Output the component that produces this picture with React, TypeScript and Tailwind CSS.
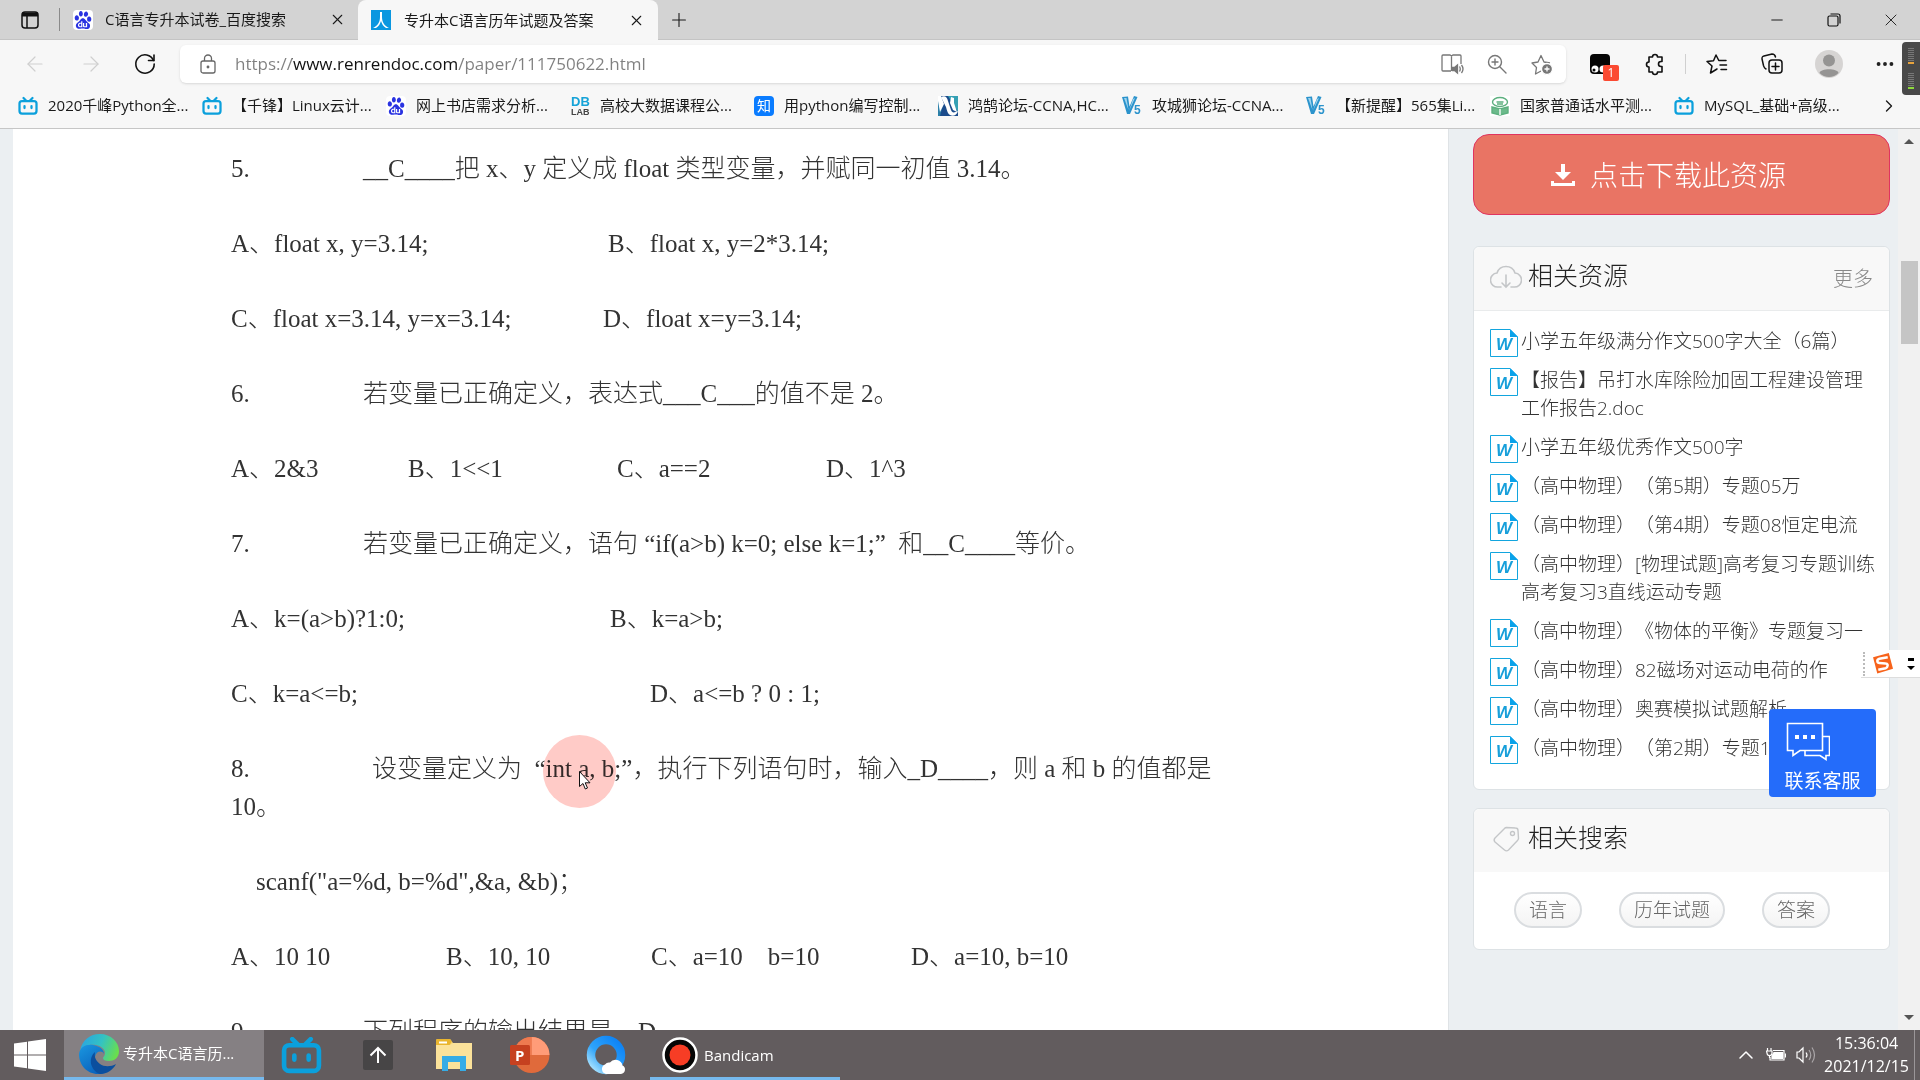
import type { ReactNode } from "react";
import { SiBaidu } from "react-icons/si";
import { ArrowLeft, ArrowRight, ChevronRight, ChevronUp, Minus, MoreHorizontal, Plus, X } from "lucide-react";

interface Bookmark {
  icon: ReactNode;
  label: string;
}

interface DocCell {
  text: string;
  width?: string;
}

const BiliIcon = ({ className }: { className: string }) => (
  <svg viewBox="0 0 40 36" className={className} fill="none" stroke="#0ba0dc" strokeWidth="4.5" strokeLinecap="round">
    <path d="M11 2l5 5M29 2l-5 5" />
    <rect x="3" y="8" width="34" height="25" rx="5" />
    <path d="M13 18v4M27 18v4" />
  </svg>
);

const BaiduIcon = ({ className }: { className: string }) => (
  <span className={`flex items-center justify-center rounded-sm bg-white ${className}`}>
    <SiBaidu className="size-[18px] text-[#2932e1]" />
  </span>
);

const VIcon = () => (
  <svg viewBox="0 0 20 20" className="size-5">
    <path d="M0 1l6-.5 1.500 10L12 0l3.500 1L8 18H5z" fill="#2b93cc" />
    <path d="M2 2l2.500 0 2 12zM11 3l2-1-6 13z" fill="#9fd4ee" />
    <text x="12" y="18" fontSize="12" fontWeight="700" fontFamily="Liberation Sans, sans-serif" fill="#2b93cc">5</text>
  </svg>
);

const bookmarks: Bookmark[] = [
  { icon: <BiliIcon className="size-5" />, label: "2020千峰Python全..." },
  { icon: <BiliIcon className="size-5" />, label: "【千锋】Linux云计..." },
  { icon: <BaiduIcon className="size-5" />, label: "网上书店需求分析..." },
  {
    icon: (
      <svg viewBox="0 0 20 20" className="size-5" fontWeight="700" fontFamily="Liberation Sans, sans-serif">
        <text x="1" y="10" fontSize="13" fill="#16a3d8">DB</text>
        <text x="1" y="19" fontSize="9" fill="#444">LAB</text>
      </svg>
    ),
    label: "高校大数据课程公...",
  },
  {
    icon: <span className="flex size-5 items-center justify-center rounded bg-[#0a7cff] text-sm leading-5 text-white">知</span>,
    label: "用python编写控制...",
  },
  {
    icon: (
      <svg viewBox="0 0 20 20" className="size-5">
        <rect width="20" height="20" fill="#1c4c8c" />
        <path d="M10 0h10v16z" fill="#35a0b4" />
        <path d="M0 0h3l2 9-3 11H0z" fill="#2b7fa8" />
        <path d="M0 0h3l3 8L2 16 0 5z" fill="#fff" />
        <path d="M3 1c4-2 6 0 7 4l3 9c1 3 3 3 7 1-1 4-5 6-8 4-2-1-3-4-4-8z" fill="#fff" />
        <path d="M13 1l3 1v5l3 9-4-2-3-7z" fill="#fff" />
      </svg>
    ),
    label: "鸿鹄论坛-CCNA,HC...",
  },
  { icon: <VIcon />, label: "攻城狮论坛-CCNA..." },
  { icon: <VIcon />, label: "【新提醒】565集Li..." },
  {
    icon: (
      <svg viewBox="0 0 20 20" className="size-5" fill="none" stroke="#5db07f" strokeWidth="1.4">
        <rect width="20" height="20" fill="#fff" stroke="none" />
        <ellipse cx="10" cy="6" rx="7.500" ry="4.500" />
        <path d="M6.500 6h7M7 8h6" />
        <path d="M2 11l8 2 8-2v6l-8 2-8-2z" fill="#6cba8b" />
        <path d="M10 13v6" stroke="#fff" />
      </svg>
    ),
    label: "国家普通话水平测...",
  },
  { icon: <BiliIcon className="size-5" />, label: "MySQL_基础+高级..." },
];

const docRows: DocCell[][] = [
  [{ text: "5.", width: "w-[132px]" }, { text: "__C____把 x、y 定义成 float 类型变量，并赋同一初值 3.14。" }],
  [{ text: "A、float x, y=3.14;", width: "w-[377px]" }, { text: "B、float x, y=2*3.14;" }],
  [{ text: "C、float x=3.14, y=x=3.14;", width: "w-[372px]" }, { text: "D、float x=y=3.14;" }],
  [{ text: "6.", width: "w-[132px]" }, { text: "若变量已正确定义，表达式___C___的值不是 2。" }],
  [
    { text: "A、2&3", width: "w-[177px]" },
    { text: "B、1<<1", width: "w-[209px]" },
    { text: "C、a==2", width: "w-[209px]" },
    { text: "D、1^3" },
  ],
  [{ text: "7.", width: "w-[132px]" }, { text: "若变量已正确定义，语句 “if(a>b) k=0; else k=1;”  和__C____等价。" }],
  [{ text: "A、k=(a>b)?1:0;", width: "w-[379px]" }, { text: "B、k=a>b;" }],
  [{ text: "C、k=a<=b;", width: "w-[419px]" }, { text: "D、a<=b ? 0 : 1;" }],
  [
    { text: "8.\n10。", width: "w-[141px]" },
    { text: "设变量定义为  “int a, b;”，执行下列语句时，输入_D____，则 a 和 b 的值都是" },
  ],
  [{ text: "", width: "w-[25px]" }, { text: "scanf(\"a=%d, b=%d\",&a, &b)；" }],
  [
    { text: "A、10 10", width: "w-[215px]" },
    { text: "B、10, 10", width: "w-[205px]" },
    { text: "C、a=10    b=10", width: "w-[260px]" },
    { text: "D、a=10, b=10" },
  ],
  [{ text: "9.", width: "w-[132px]" }, { text: "下列程序的输出结果是__D____。" }],
];

const resources = [
  "小学五年级满分作文500字大全（6篇）",
  "【报告】吊打水库除险加固工程建设管理\n工作报告2.doc",
  "小学五年级优秀作文500字",
  "（高中物理）（第5期）专题05万",
  "（高中物理）（第4期）专题08恒定电流",
  "（高中物理）[物理试题]高考复习专题训练\n高考复习3直线运动专题",
  "（高中物理）《物体的平衡》专题复习一",
  "（高中物理）82磁场对运动电荷的作",
  "（高中物理）奥赛模拟试题解析",
  "（高中物理）（第2期）专题1",
];

const searches = ["语言", "历年试题", "答案"];

const TabBar = () => (
  <div className="flex h-10 items-stretch border-b border-[#c4c4c4] bg-[#d3d3d3] text-[15px] text-[#1a1a1a]">
    <button aria-label="标签页操作" className="flex w-[59px] items-center justify-center pr-1.5">
      <svg viewBox="0 0 18 18" className="ml-1.5 size-[18px]" fill="none" stroke="#111" strokeWidth="1.5">
        <rect x="1" y="1" width="16" height="16" rx="3" />
        <path d="M1 3.500h16" strokeWidth="4" />
        <path d="M6 5v12" />
      </svg>
    </button>
    <div className="my-2 w-px bg-[#8a8a8a]" />
    <div className="flex w-[298px] items-center pr-3 pl-[13px]">
      <BaiduIcon className="size-5" />
      <span className="ml-3 flex-1 whitespace-nowrap">C语言专升本试卷_百度搜索</span>
      <button aria-label="关闭"><X className="size-[17px]" strokeWidth={1.5} /></button>
    </div>
    <div className="-mb-px flex w-[300px] items-center rounded-t-lg bg-[#f7f7f7] px-[13px]">
      <svg viewBox="0 0 20 20" className="size-5">
        <rect width="20" height="20" fill="#0a97e0" />
        <path d="M9 2h2v5c0 6 3 9 7 11h-3c-3-2-4-4-5-7-1 3-2 5-5 7H2c4-2 7-5 7-11z" fill="#fff" />
      </svg>
      <span className="ml-[13px] flex-1 whitespace-nowrap">专升本C语言历年试题及答案</span>
      <button aria-label="关闭"><X className="size-[17px]" strokeWidth={1.5} /></button>
    </div>
    <button aria-label="新建标签页" className="px-2.5"><Plus className="size-[22px]" strokeWidth={1.2} /></button>
    <div className="ml-auto flex">
      <button aria-label="最小化" className="flex w-[57px] items-center justify-center"><Minus className="size-[18px]" strokeWidth={1.3} /></button>
      <button aria-label="还原" className="flex w-[57px] items-center justify-center">
        <svg viewBox="0 0 14 14" className="size-3.5" fill="none" stroke="#111" strokeWidth="1.2">
          <rect x="1" y="3" width="10" height="10" rx="1.500" />
          <path d="M3.500 1H11a2 2 0 0 1 2 2v7.500" />
        </svg>
      </button>
      <button aria-label="关闭窗口" className="flex w-[58px] items-center justify-center"><X className="size-5" strokeWidth={1.1} /></button>
    </div>
  </div>
);

const AddressBar = () => (
  <div className="flex h-[47px] items-center pr-6 text-[#222]">
    <button aria-label="后退" className="ml-[23px] text-[#cfcfcf]"><ArrowLeft className="size-6" strokeWidth={1.2} /></button>
    <button aria-label="前进" className="ml-8 text-[#cfcfcf]"><ArrowRight className="size-6" strokeWidth={1.2} /></button>
    <button aria-label="刷新" className="ml-[30px]">
      <svg viewBox="0 0 24 24" className="size-6" fill="none" stroke="#111" strokeWidth="1.6" strokeLinecap="round">
        <path d="M20.500 8.500A9.200 9.200 0 1 0 21.200 12" />
        <path d="M21 3v5.500h-5.500" />
      </svg>
    </button>
    <div className="ml-[23px] flex h-[38px] flex-1 items-center rounded-md bg-white pr-3 pl-5 shadow-sm">
      <svg viewBox="0 0 16 20" className="h-5 w-4" fill="none" stroke="#666" strokeWidth="1.3">
        <rect x="1" y="7" width="14" height="12" rx="2" />
        <path d="M4.500 7V4.500a3.500 3.500 0 0 1 7 0V7" />
        <circle cx="8" cy="13" r="0.800" fill="#666" />
      </svg>
      <input
        aria-label="地址栏"
        defaultValue="https://www.renrendoc.com/paper/111750622.html"
        className="ml-[19px] flex-1 bg-[linear-gradient(to_right,#808080_57px,#111_57px,#111_222px,#808080_222px)] bg-clip-text text-[17px] text-transparent outline-none"
      />
      <div className="flex items-center gap-[22px]">
        <button aria-label="朗读此页">
          <svg viewBox="0 0 24 22" className="h-[22px] w-6" fill="none" stroke="#777" strokeWidth="1.3">
            <path d="M11 18H3a1 1 0 0 1-1-1V3a1 1 0 0 1 1-1h7l1.500 1L13 2h7a1 1 0 0 1 1 1v8M11.500 3v15" />
            <path d="M12.500 14.500h2l3-2.500v8l-3-2.500h-2z" fill="#777" />
            <path d="M19.500 13.500q1.500 2.500 0 5M21.500 12q3 4 0 8" />
          </svg>
        </button>
        <button aria-label="缩放">
          <svg viewBox="0 0 22 22" className="size-[22px]" fill="none" stroke="#777" strokeWidth="1.4" strokeLinecap="round">
            <circle cx="9" cy="9" r="6.500" />
            <path d="M14 14l6 6M9 6v6M6 9h6" />
          </svg>
        </button>
        <button aria-label="添加到收藏夹">
          <svg viewBox="0 0 24 24" className="size-6" fill="none" stroke="#777" strokeWidth="1.3" strokeLinejoin="round">
            <path d="M11 19l-5.500 3 1-6.500L2 11l6-1 3-6.500 3 6.500 6 1" />
            <circle cx="17" cy="17" r="5.500" fill="#777" stroke="#fff" />
            <path d="M17 14.500v5M14.500 17h5" stroke="#fff" />
          </svg>
        </button>
      </div>
    </div>
    <div className="ml-[23px] flex items-center">
      <button aria-label="扩展脚本" className="relative">
        <svg viewBox="0 0 22 22" className="size-[22px]">
          <rect x="1" y="1" width="20" height="20" rx="4" fill="#050505" />
          <circle cx="6" cy="16" r="3.500" fill="#fff" />
          <circle cx="14" cy="16" r="3.500" fill="#fff" />
          <circle cx="5" cy="17" r="1.500" fill="#050505" />
        </svg>
        <span className="absolute top-3 left-3.5 size-4 rounded-xs bg-[#fb4a32] text-center text-xs leading-4 text-white">1</span>
      </button>
      <button aria-label="扩展" className="ml-8">
        <svg viewBox="0 0 24 24" className="size-6" fill="none" stroke="#111" strokeWidth="1.6" strokeLinejoin="round">
          <path d="M6 5h3.500a2.500 2.500 0 0 1 5 0H19v4.500h-1a2.500 2.500 0 0 0 0 5h1V20h-4.500a2.500 2.500 0 0 1-5 0H6v-5a2.500 2.500 0 0 1 0-5z" />
        </svg>
      </button>
      <div className="ml-[18px] h-5 w-px bg-[#d0d0d0]" />
      <button aria-label="收藏夹" className="ml-[19px]">
        <svg viewBox="0 0 24 24" className="size-6" fill="none" stroke="#111" strokeWidth="1.5" strokeLinejoin="round" strokeLinecap="round">
          <path d="M12 17l-6.500 4 1.500-7L2 9.500l6.500-.8L11 3l2.800 5.500H21M15 13h6.500M16 17.500h5.500" />
        </svg>
      </button>
      <button aria-label="集锦" className="ml-[31px]">
        <svg viewBox="0 0 24 24" className="size-6" fill="none" stroke="#111" strokeWidth="1.5" strokeLinecap="round">
          <rect x="9" y="8" width="13" height="13" rx="3" />
          <path d="M15.500 11v7M12 14.500h7M6 17c-2-1-2-2-2.500-3.500L2 7c0-2 0-2.500 2-3l8-2c2 0 3 .5 3.500 3" />
        </svg>
      </button>
      <button aria-label="个人资料" className="ml-[31px]">
        <svg viewBox="0 0 28 28" className="size-7">
          <circle cx="14" cy="14" r="14" fill="#d6d4d3" />
          <circle cx="14" cy="10.500" r="6" fill="#959493" />
          <path d="M4.500 23c1-5 18-5 19 0a13.500 13.500 0 0 1-19 0z" fill="#959493" />
        </svg>
      </button>
      <button aria-label="设置及其他" className="ml-[31px]"><MoreHorizontal className="size-[22px]" strokeWidth={2.2} /></button>
    </div>
  </div>
);

const BookmarkBar = () => (
  <nav className="flex h-[42px] items-center border-b border-[#c6c6c6] pb-1 pl-[18px] text-[15px] text-[#1a1a1a]">
    {bookmarks.map((item) => (
      <a key={item.label} href="#" className="flex w-46 shrink-0 items-center gap-2.5 whitespace-nowrap">
        {item.icon}
        {item.label}
      </a>
    ))}
    <button aria-label="更多收藏" className="mr-[21px] ml-auto"><ChevronRight className="size-5" strokeWidth={1.6} /></button>
  </nav>
);

const Paper = () => (
  <article className="flex-1 border-r border-[#dfe3e6] bg-white pt-[21px] pl-[218px] font-['Liberation_Serif','Noto_Sans_CJK_SC',serif] text-[25px] leading-[38px] font-light text-[#333]">
    {docRows.map((row, index) => (
      <div key={index} className="mb-[37px] flex whitespace-pre">
        {row.map((cell, i) => (
          <p key={i} className={`shrink-0 ${cell.width ?? ""}`}>{cell.text}</p>
        ))}
      </div>
    ))}
  </article>
);

const WordIcon = () => (
  <svg viewBox="0 0 28 28" className="mt-0.5 -mb-0.5 size-7 shrink-0">
    <path d="M0.500 0.500H20L27.500 8v19.500H0.500z" fill="#fff" stroke="#12a5de" />
    <path d="M20 0v8h8z" fill="#0aa2ea" />
    <text x="6" y="21" fontSize="17" fontWeight="700" fontStyle="italic" fontFamily="Liberation Sans, sans-serif" fill="#179fda">W</text>
  </svg>
);

const Sidebar = () => (
  <aside className="w-[417px] shrink-0 pt-[5px] font-light">
    <button className="flex h-[81px] w-full items-center justify-center gap-[15px] rounded-2xl border border-[#e0345f] bg-[#e97464] pr-[26px] text-[28px] text-white">
      <svg viewBox="0 0 24 24" className="size-6" fill="#fff">
        <path d="M10 1h4v8h6l-8 8-8-8h6zM0 18h3v2h18v-2h3v5H0z" />
      </svg>
      点击下载此资源
    </button>

    <section className="mt-[31px] rounded-md border border-[#dde2e5] bg-white">
      <header className="flex h-16 items-center rounded-t-md border-b border-[#e9ebec] bg-[#f8f8f8] px-4">
        <svg viewBox="0 0 32 28" className="mb-1 h-7 w-8" fill="none" stroke="#c4c6c8" strokeWidth="1.6" strokeLinecap="round">
          <path d="M11 24H8A7 7 0 0 1 7 10a9.500 9.500 0 0 1 18 0 7 7 0 0 1-1 14h-3" />
          <path d="M16 12v12M12 20l4 4 4-4" />
        </svg>
        <h2 className="mb-1.5 ml-1.5 flex-1 text-[25px] text-[#222]">相关资源</h2>
        <a href="#" className="text-xl text-[#888]">更多</a>
      </header>
      <ul className="space-y-[11px] pt-4 pb-[27px] pl-4 text-[19px] leading-7 text-[#333]">
        {resources.map((item) => (
          <li key={item}>
            <a href="#" className="flex gap-[3px] whitespace-pre">
              <WordIcon />
              <span>{item}</span>
            </a>
          </li>
        ))}
      </ul>
    </section>

    <section className="mt-[18px] rounded-md border border-[#dde2e5] bg-white">
      <header className="flex h-[63px] items-center rounded-t-md bg-[#f8f8f8] px-4">
        <svg viewBox="0 0 32 28" className="mb-1 h-7 w-8" fill="none" stroke="#c4c6c8" strokeWidth="1.4">
          <path d="M5 13L14.500 3.500a3 3 0 0 1 2-1l9 .5a2.500 2.500 0 0 1 2.500 2.500l.5 8a3 3 0 0 1-1 2l-9 9.500a3 3 0 0 1-4 0L5 17a3 3 0 0 1 0-4z" />
          <circle cx="22.500" cy="8.500" r="2" />
        </svg>
        <h2 className="mb-1.5 ml-1.5 text-[25px] text-[#222]">相关搜索</h2>
      </header>
      <div className="flex gap-[37px] px-10 pt-5 pb-[21px] text-[19px] leading-8 text-[#666]">
        {searches.map((item) => (
          <a key={item} href="#" className="rounded-full border-2 border-[#dadde0] bg-linear-to-b from-white to-[#f4f4f4] px-[13px]">{item}</a>
        ))}
      </div>
    </section>
  </aside>
);

const Scrollbar = () => (
  <div className="flex w-[22px] shrink-0 flex-col items-center bg-[#f1f1f1] py-2.5">
    <svg viewBox="0 0 10 5" className="h-[5px] w-2.5"><path d="M0 5l5-5 5 5z" fill="#555" /></svg>
    <div className="mt-[117px] h-[83px] w-[17px] bg-[#c5c5c5]" />
    <svg viewBox="0 0 10 5" className="mt-auto h-[5px] w-2.5"><path d="M0 0l5 5 5-5z" fill="#555" /></svg>
  </div>
);

const EdgeLogo = () => (
  <svg viewBox="0 0 40 40" className="size-10">
    <defs>
      <linearGradient id="edgeTop" x1="0" y1="0.300" x2="1" y2="0.600">
        <stop offset="0" stopColor="#2aa5e0" />
        <stop offset="0.500" stopColor="#33c2c4" />
        <stop offset="1" stopColor="#6be04a" />
      </linearGradient>
      <linearGradient id="edgeSide" x1="0" y1="0" x2="0.600" y2="1">
        <stop offset="0" stopColor="#1a97e0" />
        <stop offset="1" stopColor="#0a63bd" />
      </linearGradient>
    </defs>
    <path d="M1 17C3 6 11 0 21 0c11 0 19 8 19 17 0 7-5 10-10 10-4 0-6-1-6-3 0-1 2-2 2-5 0-4-4-7-9-8C9 10 3 13 1 17z" fill="url(#edgeTop)" />
    <path d="M0 20c1-7 7-10 14-9 6 1 11 4 11 9-2-4-8-3-9 3-1 8 4 14 10 16-3 1-5 1-7 1C8 40 0 31 0 20z" fill="url(#edgeSide)" />
    <path d="M16 18c-7 6-5 18 5 22 7 0 13-4 16-10-5 3-12 3-16 0-4-3-6-7-5-12z" fill="#0b4f9e" />
  </svg>
);

const Taskbar = () => (
  <footer className="flex h-[50px] shrink-0 items-center bg-[#625c5e] text-[15px] text-white">
    <button aria-label="开始" className="flex w-16 justify-center pr-1">
      <svg viewBox="0 0 32 32" className="size-8" fill="#fff">
        <path d="M0 4.500l13-1.800V15.500H0zM14 2.500L32 0v15.500H14zM0 16.500h13v12.800L0 27.500zM14 16.500h18V32l-18-2.500z" />
      </svg>
    </button>
    <button className="flex h-full w-[200px] items-center gap-1 border-b-3 border-[#76b9ed] bg-[#858083] pl-[15px]">
      <EdgeLogo />
      专升本C语言历...
    </button>
    <button aria-label="哔哩哔哩" className="ml-[17px]">
      <BiliIcon className="h-[37px] w-[41px]" />
    </button>
    <button aria-label="上传" className="ml-[41px] flex size-[30px] items-center justify-center rounded-xs bg-[#474546]">
      <svg viewBox="0 0 18 18" className="size-[18px]" fill="none" stroke="#fff" strokeWidth="2"><path d="M9 17V2M1.500 9.500L9 2l7.500 7.500" /></svg>
    </button>
    <button aria-label="文件资源管理器" className="ml-[43px]">
      <svg viewBox="0 0 36 32" className="h-8 w-9">
        <path d="M0 1.500A1.500 1.500 0 0 1 1.500 0H14l3 4h19v26H0z" fill="#f8d775" />
        <path d="M0 1.500A1.500 1.500 0 0 1 1.500 0H14l2 2.500L13.500 6H0z" fill="#e9b52f" />
        <path d="M3 2.500h8v2H3z" fill="#fff" />
        <path d="M0 6h14l3-2h19v26H0z" fill="#fbe29a" />
        <path d="M6 32V17h24v15h-6v-9H12v9z" fill="#35ace6" />
      </svg>
    </button>
    <button aria-label="PowerPoint" className="ml-[38px]">
      <svg viewBox="0 0 40 36" className="h-9 w-10">
        <circle cx="21.500" cy="18" r="18" fill="#e06a3b" />
        <path d="M21.500 0a18 18 0 0 1 18 18h-18z" fill="#ff9c78" />
        <path d="M21.500 0a18 18 0 0 0-18 18h18z" fill="#ee7a50" />
        <rect x="0" y="8" width="20" height="20" rx="1.500" fill="#c64120" />
        <text x="5" y="24" fontSize="15" fontWeight="700" fontFamily="Open Sans, sans-serif" fill="#fff">P</text>
      </svg>
    </button>
    <button aria-label="QQ浏览器" className="ml-9">
      <svg viewBox="0 0 40 40" className="size-10">
        <defs>
          <linearGradient id="qqRing" x1="0" y1="1" x2="1" y2="0">
            <stop offset="0" stopColor="#b4e8ff" />
            <stop offset="0.400" stopColor="#2fa4fa" />
            <stop offset="1" stopColor="#0a80f5" />
          </linearGradient>
        </defs>
        <circle cx="20" cy="20" r="15" fill="none" stroke="url(#qqRing)" strokeWidth="8.500" />
        <path d="M20 39a5 5 0 0 1-1-9.500 5 5 0 0 1 5-2 7 7 0 0 1 12.500 3A4.500 4.500 0 0 1 35 39z" fill="#fff" />
      </svg>
    </button>
    <button className="ml-6 flex h-full w-[190px] items-center gap-1.5 border-b-3 border-[#76b9ed] pt-[3px] pl-3">
      <svg viewBox="0 0 36 36" className="size-9">
        <circle cx="18" cy="18" r="16.500" fill="#050505" stroke="#fff" strokeWidth="2.500" />
        <circle cx="18" cy="18" r="10.500" fill="#f73d25" />
      </svg>
      Bandicam
    </button>
    <div className="ml-auto flex h-full items-center">
      <button aria-label="显示隐藏的图标"><ChevronUp className="size-6" strokeWidth={1.5} /></button>
      <svg viewBox="0 0 20 14" className="ml-2 h-3.5 w-5" fill="none" stroke="#fff" strokeWidth="1.2">
        <path d="M7 2.500h11v9.500H4V9" />
        <path d="M8 4.500h8.500v6H6V8z" fill="#fff" />
        <path d="M19.500 5.500v4M1.500 0v2.500M5 0v2.500M0.500 3h5.500v2a2.500 2.500 0 0 1-5 0zM3.500 7v3" />
      </svg>
      <svg viewBox="0 0 20 18" className="ml-2.5 h-[18px] w-5" fill="none" stroke="#fff" strokeWidth="1.2">
        <path d="M1 6h2l4-4v14l-4-4H1z" />
        <path d="M10 6.500q2 2.500 0 5" />
        <path d="M13 4q3.500 5 0 10M16 1.500q5 7.500 0 15" stroke="#aaa6a8" />
      </svg>
      <time className="ml-2 text-center text-base leading-[23px]">
        15:36:04
        <br />
        2021/12/15
      </time>
      <div className="mx-[5px] h-full w-px bg-[#9a9698]" />
    </div>
  </footer>
);

// widgets that float above the browser window
const Overlays = () => (
  <>
    <div className="absolute top-[735px] left-[543px] size-[73px] rounded-full bg-[#ffcbc7] mix-blend-multiply" />
    <svg viewBox="0 0 12 19" className="absolute top-[771px] left-[579px] h-[19px] w-3">
      <path d="M0.500 0.500v15l3.500-3 2.300 5.500 2.200-1-2.300-5.200h4.800z" fill="#fff" stroke="#111" />
    </svg>

    <div className="absolute top-[42px] right-0 flex h-[53px] w-[18px] flex-col items-center justify-between rounded-l bg-[#494949] py-1.5">
      <div className="flex flex-col gap-px">
        {[0, 1, 2, 3, 4, 5, 6].map((n) => <i key={n} className="h-px w-1.5 bg-[#777]" />)}
        <i className="h-0.5 w-1.5 bg-[#e8a33c]" />
      </div>
      <div className="flex flex-col gap-px">
        {[0, 1, 2, 3, 4, 5, 6].map((n) => <i key={n} className="h-px w-1.5 bg-[#777]" />)}
        <i className="h-0.5 w-1.5 bg-[#8ed93c]" />
      </div>
    </div>

    <div className="absolute top-[650px] right-0 flex h-7 w-[59px] items-center border-b border-[#ddd] bg-white pl-0.5">
      <div className="h-6 border-l-2 border-dotted border-[#bbb]" />
      <svg viewBox="0 0 20 20" className="ml-[7px] size-[21px]">
        <path d="M1 4l15-4 4 15-15 4.500z" fill="#f7631b" />
        <path d="M15 4L7 5.500c-3 1-2 4 0 4l6 .5c3 0 2 4 0 4.500L6 16" fill="none" stroke="#fff" strokeWidth="2.400" />
      </svg>
      <svg viewBox="0 0 8 14" className="ml-3.5 h-3.5 w-2"><path d="M1 1h6v3H1zM0 9h8l-4 4z" fill="#000" /></svg>
    </div>

    <button className="absolute top-[709px] right-[44px] flex h-[88px] w-[107px] flex-col rounded-sm bg-[#246cfa] pt-3 text-[19px] leading-7 text-white">
      <svg viewBox="0 0 44 40" className="ml-[17px] h-10 w-11" fill="none" stroke="#fff" strokeWidth="1.6">
        <path d="M1.500 2.500h35v27H14l-7 5v-5H1.500z" />
        <path d="M36.500 15.500h7v19H40v4l-6-4H19v-5" />
        <path d="M9 14h4v4H9zM17 14h4v4h-4zM25 14h4v4h-4z" fill="#fff" stroke="none" />
      </svg>
      <span className="mt-1.5 self-center">联系客服</span>
    </button>
  </>
);

export default function App() {
  return (
    <div className="relative flex h-screen flex-col overflow-hidden bg-[#f7f7f7] font-['Open_Sans','Noto_Sans_CJK_SC',sans-serif] [text-spacing-trim:space-all]">
      <TabBar />
      <AddressBar />
      <BookmarkBar />
      <main className="flex min-h-0 flex-1 overflow-hidden bg-[#ebeff2] pl-[13px]">
        <Paper />
        <div className="flex gap-2 pl-6">
          <Sidebar />
          <Scrollbar />
        </div>
      </main>
      <Taskbar />
      <Overlays />
    </div>
  );
}
